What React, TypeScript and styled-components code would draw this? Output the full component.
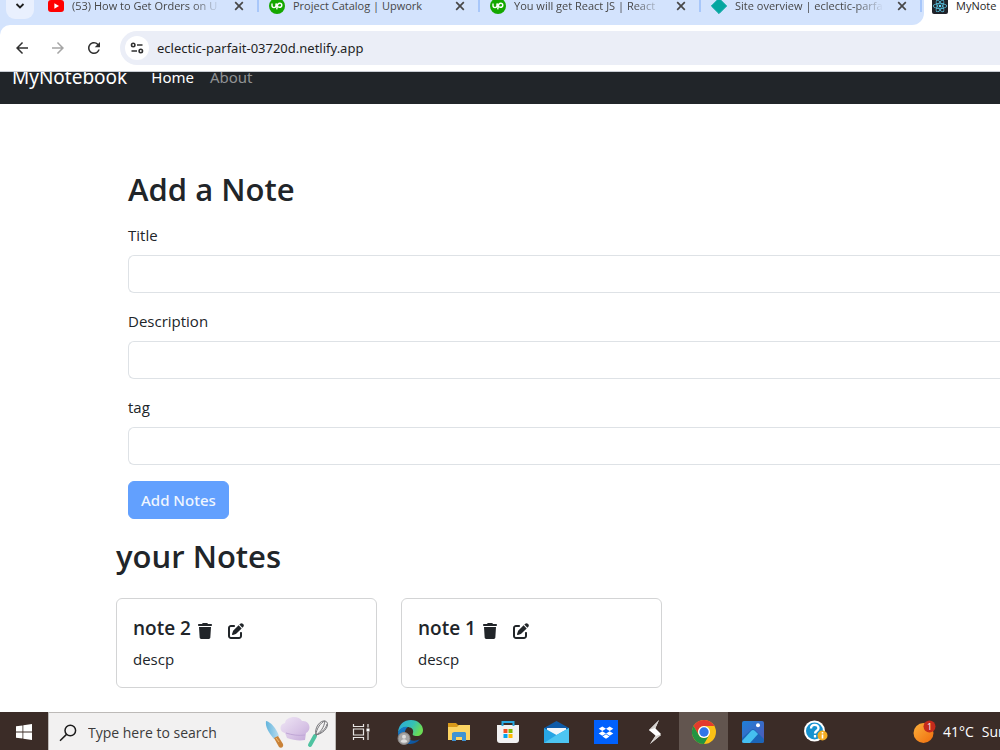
import React from "react";
import styled, { createGlobalStyle } from "styled-components";
import { FaTrash, FaPenToSquare } from "react-icons/fa6";
import { FaReact } from "react-icons/fa";
import { MdArrowBack, MdArrowForward, MdRefresh } from "react-icons/md";

const GlobalStyle = createGlobalStyle`
  * { box-sizing: border-box; }
  html, body, #root { height: 100%; }
  body {
    margin: 0;
    background: #fff;
    color: #212529;
    font-family: "Open Sans", "Noto Sans", sans-serif;
    font-size: 15px;
    line-height: 24px;
    overflow: hidden;
  }
  button, input { font: inherit; color: inherit; }
  h1, p { margin: 0; }
`;

const Screen = styled.div`
  display: flex;
  flex-direction: column;
  height: 100vh;
  overflow: hidden;
`;

const IconButton = styled.button<{ $size: number }>`
  display: flex;
  flex: none;
  align-items: center;
  justify-content: center;
  width: ${(p) => p.$size}px;
  height: ${(p) => p.$size}px;
  padding: 0;
  border: 0;
  background: none;
`;

/* ---------- browser chrome ---------- */

const TabStrip = styled.div`
  display: flex;
  flex: none;
  height: 25px;
  background: #fff;
  font-size: 11px;
  line-height: 16px;
`;

const InactiveTabs = styled.div`
  display: flex;
  flex: none;
  padding: 0 2px 0 6px;
  background: #d3e3fd;
  border-radius: 0 0 12px 0;
`;

const TabSearch = styled.button`
  display: flex;
  flex: none;
  align-items: center;
  justify-content: center;
  width: 28px;
  height: 19px;
  margin-right: 4px;
  padding: 0 0 8px;
  border: 0;
  border-radius: 0 0 9px 9px;
  background: #e9f0fe;
`;

const Tab = styled.div<{ $active?: boolean }>`
  display: flex;
  flex: none;
  align-items: center;
  gap: 8px;
  width: 221px;
  height: 12px;
  padding: 0 8px 0 ${(p) => (p.$active ? 8 : 10)}px;
  border-right: ${(p) => (p.$active ? "0" : "2px solid #a8c7fa")};
  color: ${(p) => (p.$active ? "#1f1f1f" : "#474747")};
`;

const TabTitle = styled.span<{ $fade?: boolean }>`
  flex: 1;
  min-width: 0;
  overflow: hidden;
  white-space: nowrap;
  mask-image: ${(p) =>
    p.$fade ? "linear-gradient(to right, #000 80%, transparent 100%)" : "none"};
`;

const ToolbarBack = styled.div`
  flex: none;
  background: #d3e3fd;
`;

const Toolbar = styled.div`
  display: flex;
  align-items: center;
  height: 47px;
  padding: 0 0 1px 10px;
  background: #fff;
  border-bottom: 1px solid #c9cdd3;
  border-radius: 10px 0 0 0;
`;

const NavButtons = styled.div`
  display: flex;
  gap: 12px;
  margin-right: 14px;
`;

const AddressBar = styled.div`
  display: flex;
  flex: 1;
  align-items: center;
  gap: 8px;
  height: 34px;
  padding-left: 5px;
  border-radius: 17px 0 0 17px;
  background: #ebeef7;
`;

const SiteInfo = styled(IconButton)`
  border-radius: 50%;
  background: #fff;
`;

const Address = styled.input`
  flex: 1;
  min-width: 0;
  padding: 0;
  border: 0;
  outline: 0;
  background: none;
  font-family: "Noto Sans", sans-serif;
  font-size: 13px;
  color: #1f1f1f;
`;

/* ---------- web page ---------- */

const Navbar = styled.nav`
  flex: none;
  height: 32px;
  overflow: hidden;
  background: #212529;
  font-family: "Noto Sans", sans-serif;
`;

const NavRow = styled.div`
  display: flex;
  align-items: center;
  gap: 16px;
  height: 9px;
  padding-left: 12px;
`;

const Brand = styled.a`
  margin-right: 8px;
  font-size: 19px;
  color: #fff;
  text-decoration: none;
`;

const NavLink = styled.a<{ $current?: boolean }>`
  color: ${(p) => (p.$current ? "#fff" : "#909294")};
  text-decoration: none;
`;

const Page = styled.main`
  flex: 1;
  min-height: 0;
  overflow: hidden;
  padding: 63px 0 0 116px;
`;

const NoteForm = styled.form`
  padding-left: 12px;
`;

const Heading = styled.h1`
  font-size: 31px;
  font-weight: 600;
  line-height: 44px;
`;

const Field = styled.div`
  display: flex;
  flex-direction: column;
  gap: 8px;
  margin-bottom: 16px;
`;

const Fields = styled.div`
  padding-top: 12px;
`;

const TextInput = styled.input`
  height: 38px;
  padding: 6px 12px;
  border: 1px solid #dee2e6;
  border-right: 0;
  border-radius: 6px 0 0 6px;
  background: #fff;
`;

const SubmitButton = styled.button`
  height: 38px;
  padding: 0 12px;
  border: 1px solid #62a0fe;
  border-radius: 6px;
  background: #62a0fe;
  color: #eff6ff;
  font-family: "Noto Sans", sans-serif;
  font-weight: 500;
`;

const Notes = styled.section`
  padding-top: 15px;
`;

const NoteGrid = styled.div`
  display: grid;
  grid-template-columns: repeat(auto-fill, 261px);
  gap: 24px;
  padding-top: 20px;
`;

const Card = styled.article`
  height: 90px;
  padding: 16px;
  border: 1px solid #d3d4d5;
  border-radius: 6px;
`;

const CardHead = styled.div`
  display: flex;
  align-items: flex-start;
  height: 28px;
  margin-bottom: 4px;
`;

const CardTitle = styled.h2`
  margin: 0 6px 0 0;
  font-size: 19px;
  font-weight: 600;
  line-height: 26px;
`;

const CardActions = styled.div`
  display: flex;
  gap: 15px;
  padding-top: 8px;
`;

/* ---------- taskbar ---------- */

const Taskbar = styled.footer`
  display: flex;
  flex: none;
  height: 38px;
  background: #3b2c27;
  color: #fff;
`;

const TaskButton = styled.button<{ $active?: boolean; $width?: number }>`
  display: flex;
  flex: none;
  align-items: center;
  justify-content: center;
  width: ${(p) => p.$width ?? 49}px;
  padding: 2px 0 0;
  border: 0;
  background: ${(p) => (p.$active ? "#62554f" : "none")};
`;

const SearchBox = styled.label`
  display: flex;
  flex: none;
  align-items: center;
  width: 288px;
  padding: 2px 5px 0 10px;
  border: 1px solid #bdbab8;
  border-bottom: 0;
  background: #f2f1f1;
`;

const SearchInput = styled.input`
  flex: 1;
  min-width: 0;
  margin-left: 11px;
  padding: 0;
  border: 0;
  outline: 0;
  background: none;
  font-size: 14px;
  color: #3b3b3b;
  &::placeholder { color: #3b3b3b; opacity: 1; }
`;

const Weather = styled.button`
  display: flex;
  flex: none;
  align-items: center;
  gap: 7px;
  margin-left: 59px;
  padding: 2px 0 0;
  border: 0;
  background: none;
  color: #fff;
  font-size: 14px;
  white-space: nowrap;
`;

const WeatherText = styled.span`
  display: flex;
  gap: 8px;
`;

/* ---------- drawings ---------- */

const YouTube = () => (
  <svg width="16" height="16" viewBox="0 0 16 16">
    <rect x="0" y="2" width="16" height="12" rx="3" fill="#f00" />
    <path d="M6.400 5.200v5.600L11 8z" fill="#fff" />
  </svg>
);

const Upwork = () => (
  <svg width="16" height="16" viewBox="0 0 16 16">
    <circle cx="8" cy="8" r="8" fill="#14a800" />
    <path
      d="M3 5.400v2.200a2 2 0 0 0 4 0V5.400c.6 2 1.600 3.700 3.300 3.900 1.500 0 2.500-.9 2.500-2.100s-.9-2-2.100-2c-1.400 0-2.100 1-2.300 2.400l-.7 3.800"
      fill="none" stroke="#fff" strokeWidth="1.400"
    />
  </svg>
);

const Netlify = () => (
  <svg width="16" height="16" viewBox="0 0 16 16">
    <path d="M8 .4 15.600 8 8 15.600.4 8z" fill="#05a6a0" stroke="#05a6a0" strokeLinejoin="round" />
  </svg>
);

const ReactBadge = styled.span`
  display: flex;
  align-items: center;
  justify-content: center;
  width: 16px;
  height: 16px;
  border-radius: 2px;
  background: #20232a;
  color: #61dafb;
`;

const Close = () => (
  <svg width="10" height="10" viewBox="0 0 10 10">
    <path d="m1.200 1.200 7.600 7.600M8.800 1.200 1.200 8.800" stroke="#474747" strokeWidth="1.700" />
  </svg>
);

const ChevronDown = () => (
  <svg width="10" height="10" viewBox="0 0 10 10">
    <path d="m1.500 3 3.500 3.500L8.500 3" fill="none" stroke="#1f1f1f" strokeWidth="1.800" />
  </svg>
);

const Tune = () => (
  <svg width="14" height="14" viewBox="0 0 14 14" fill="none" stroke="#303030" strokeWidth="1.600">
    <circle cx="3.200" cy="4" r="1.700" />
    <path d="M7 4h5.500M1.500 10H7" />
    <circle cx="10.800" cy="10" r="1.700" />
  </svg>
);

const Windows = () => (
  <svg width="16" height="16" viewBox="0 0 16 16" fill="#fff">
    <path d="M0 2.300 6.500 1.400v6.200H0zM7.300 1.300 16 0v7.600H7.300zM0 8.400h6.500v6.200L0 13.700zM7.300 8.400H16V16l-8.700-1.300z" />
  </svg>
);

const Magnifier = () => (
  <svg width="18" height="18" viewBox="0 0 18 18" fill="none" stroke="#1b1b1b" strokeWidth="1.500">
    <circle cx="11.300" cy="6.500" r="5.300" />
    <path d="M7.500 10.400 1 16.800" />
  </svg>
);

const Kitchen = () => (
  <svg width="66" height="34" viewBox="0 0 66 34">
    <defs>
      <linearGradient id="hat" x1="0" y1="0" x2="1" y2="1">
        <stop offset="0" stopColor="#efe6f5" />
        <stop offset=".6" stopColor="#d8c4e6" />
        <stop offset="1" stopColor="#c3a8d8" />
      </linearGradient>
      <linearGradient id="blade" x1="0" y1="0" x2="1" y2="0">
        <stop offset="0" stopColor="#62b4dc" />
        <stop offset="1" stopColor="#b8dcef" />
      </linearGradient>
    </defs>
    <path d="M2 5c5 1 10 7 13 15l-5 3C5 17 1 11 2 5z" fill="url(#blade)" />
    <path d="m10 22 4-2 5 8c1 3-2 5-4 3z" fill="#c98238" />
    <path d="m12 22 3 4" stroke="#f0bd76" strokeWidth="1" />
    <path d="M21 17c-6-1-6-9 0-10 1-7 14-8 17-2 8-1 10 9 4 12l-1 7c-6 1-12 0-18-2z" fill="url(#hat)" />
    <path d="M22 17c6 2 13 3 19 2" fill="none" stroke="#c0a6d6" strokeWidth="1" />
    <path d="m46 29 5-9" stroke="#4fc3a1" strokeWidth="4" strokeLinecap="round" />
    <g fill="none" stroke="#77777b" strokeWidth="1">
      <path d="M52 19c-2-7 4-15 9-14s3 11-9 14z" />
      <path d="M52 19c0-6 5-13 9-14-1 6-4 11-9 14zM52 19c4-1 10-6 11-11" />
    </g>
  </svg>
);

const TaskView = () => (
  <svg width="18" height="18" viewBox="0 0 18 18" fill="none" stroke="#e8e5e3" strokeWidth="1.200">
    <path d="M1.500 1v2.500h10V1M1.500 17v-2.500h10V17M1.500 6h10v6h-10zM16 1v3.500M16 9v8" />
    <rect x="14.500" y="5.500" width="3" height="3" fill="#fff" stroke="none" />
  </svg>
);

const Edge = () => (
  <svg width="26" height="26" viewBox="0 0 26 26">
    <defs>
      <linearGradient id="edgeTop" x1="0" y1="0" x2="1" y2=".4">
        <stop offset="0" stopColor="#2aa8dc" />
        <stop offset=".6" stopColor="#35c1b5" />
        <stop offset="1" stopColor="#6bdc55" />
      </linearGradient>
      <linearGradient id="edgeLow" x1="0" y1="0" x2="1" y2="1">
        <stop offset="0" stopColor="#1681cf" />
        <stop offset="1" stopColor="#0c4c94" />
      </linearGradient>
    </defs>
    <path d="M1 13C2 5 7 1 14 1c7 0 12 5 12 10 0 4-3 6-6 6-4 0-5-1-4-3 1-4-2-6-6-6-4 0-7 2-9 5z" fill="url(#edgeTop)" />
    <path d="M1 13c2-4 6-6 10-5-3 2-4 6-2 9 3 5 9 6 14 3-3 4-7 5-11 5C6 25 1 20 1 13z" fill="url(#edgeLow)" />
    <circle cx="7" cy="19.500" r="6" fill="#a6a6a6" stroke="#8a8583" />
    <circle cx="7" cy="17.700" r="2" fill="#dedede" />
    <path d="M3.800 22.800c0-3.500 6.400-3.500 6.400 0-1.600 1.400-4.800 1.400-6.400 0z" fill="#dedede" />
  </svg>
);

const Explorer = () => (
  <svg width="22" height="20" viewBox="0 0 22 20">
    <path d="M0 1h8l2 2h12v15H0z" fill="#d99a1b" />
    <path d="M0 5h9l2-2h11v15H0z" fill="#fcd462" />
    <path d="M4 19v-8l2-1h11l1 1v8h-4v-4H8v4z" fill="#3f93d2" />
  </svg>
);

const Store = () => (
  <svg width="24" height="24" viewBox="0 0 24 24">
    <path d="M1 5h22v15a3 3 0 0 1-3 3H4a3 3 0 0 1-3-3z" fill="#f2f2f2" />
    <path d="M6.500 6V2h11v4" fill="none" stroke="#29a9e1" strokeWidth="2" />
    <path d="M7.500 9h4v4h-4z" fill="#f25022" />
    <path d="M12.500 9h4v4h-4z" fill="#7fba00" />
    <path d="M7.500 14h4v4h-4z" fill="#00a4ef" />
    <path d="M12.500 14h4v4h-4z" fill="#ffb900" />
  </svg>
);

const Mail = () => (
  <svg width="26" height="24" viewBox="0 0 26 24">
    <path d="M0 8 12.500 1 25 8v6H0z" fill="#0f5ba7" />
    <path d="M3 8h19v7H3z" fill="#f4f7fa" />
    <path d="M0 8l12.500 7L25 8v15H0z" fill="#27a5e4" />
    <path d="M25 8v15H0l12.500-8z" fill="#4dc5f1" />
  </svg>
);

const Dropbox = () => (
  <svg width="24" height="24" viewBox="0 0 24 24">
    <path d="M0 0h24v24H0z" fill="#0061fe" />
    <path
      d="m8.300 6.500 3.700 2.300-3.700 2.300-3.600-2.300zM15.700 6.500l3.600 2.300-3.600 2.300L12 8.800zM8.300 11.200l3.700 2.300-3.700 2.300-3.600-2.300zM15.700 11.200l3.600 2.300-3.600 2.300L12 13.500zM12 14.300l3.500 2.200L12 18.700l-3.500-2.200z"
      fill="#fff"
    />
  </svg>
);

const Bolt = () => (
  <svg width="14" height="24" viewBox="0 0 14 24">
    <path d="M11 0 1 10l7 5-6 9 11-9-6-6z" fill="#f5f3f1" />
    <path d="m11 0-4 9-6 1zM8 15l5 0-11 9z" fill="#d6d2cf" />
    <path d="m1 10 6-2 6 6-5 2z" fill="#fff" />
  </svg>
);

const Chrome = () => (
  <svg width="24" height="24" viewBox="0 0 24 24">
    <circle cx="12" cy="12" r="12" fill="#fbc116" />
    <path d="M1.600 6A12 12 0 0 1 22.400 6H12a6 6 0 0 0-5.200 9z" fill="#e33b2e" />
    <path d="M1.600 6A12 12 0 0 0 12 24l5.200-9a6 6 0 0 1-10.400 0z" fill="#229342" />
    <circle cx="12" cy="12" r="6" fill="#fff" />
    <circle cx="12" cy="12" r="4.700" fill="#2f75e8" />
  </svg>
);

const Photos = () => (
  <svg width="22" height="22" viewBox="0 0 22 22">
    <defs>
      <linearGradient id="sky" x1="0" y1="0" x2="1" y2="1">
        <stop offset="0" stopColor="#1e80d8" />
        <stop offset="1" stopColor="#5257b5" />
      </linearGradient>
      <clipPath id="frame"><rect width="22" height="22" rx="2" /></clipPath>
    </defs>
    <g clipPath="url(#frame)">
      <rect width="22" height="22" fill="url(#sky)" />
      <path d="M0 17 9 9q2-2 4 0l9 9v4H0z" fill="#1c65b8" />
      <path d="M0 20 9 10q2-2 4 0l3 3-8 9H0z" fill="#45bff0" />
    </g>
    <circle cx="16" cy="4.300" r="2" fill="#fff" />
  </svg>
);

const Help = () => (
  <svg width="24" height="24" viewBox="0 0 24 24">
    <circle cx="10.500" cy="11" r="10.500" fill="#fff" />
    <circle cx="10.500" cy="11" r="8.500" fill="#1592d0" />
    <path d="M7 8.500c0-5 7.500-4.500 7.500-.5 0 3-3.500 2.500-3.500 5.500M11 15v2.500" fill="none" stroke="#fff" strokeWidth="2.300" />
    <circle cx="18.500" cy="15.500" r="5" fill="#f5ad22" />
    <path d="M18.500 12v1.500M18.500 14.500v4" stroke="#fff" strokeWidth="1.600" />
  </svg>
);

const Sun = () => (
  <svg width="23" height="24" viewBox="0 0 23 24">
    <defs>
      <linearGradient id="sun" x1="0" y1="0" x2="1" y2="1">
        <stop offset="0" stopColor="#fbb03b" />
        <stop offset="1" stopColor="#ef6c0c" />
      </linearGradient>
    </defs>
    <circle cx="10.500" cy="13" r="10" fill="url(#sun)" />
    <circle cx="16.500" cy="6.500" r="6" fill="#c42b1c" />
    <text x="16.500" y="10" fontSize="9" fill="#fff" textAnchor="middle">1</text>
  </svg>
);

/* ---------- screen ---------- */

const tabs = [
  { icon: <YouTube />, title: "(53) How to Get Orders on U", fade: true },
  { icon: <Upwork />, title: "Project Catalog | Upwork", fade: false },
  { icon: <Upwork />, title: "You will get React JS | React", fade: true },
  { icon: <Netlify />, title: "Site overview | eclectic-parfa", fade: true },
];

const fields = [
  { id: "title", label: "Title" },
  { id: "description", label: "Description" },
  { id: "tag", label: "tag" },
];

const notes = [
  { title: "note 2", description: "descp" },
  { title: "note 1", description: "descp" },
];

const apps = [
  { name: "Task View", icon: <TaskView /> },
  { name: "Edge", icon: <Edge /> },
  { name: "File Explorer", icon: <Explorer /> },
  { name: "Store", icon: <Store /> },
  { name: "Mail", icon: <Mail /> },
  { name: "Dropbox", icon: <Dropbox /> },
  { name: "Shortcut", icon: <Bolt /> },
  { name: "Chrome", icon: <Chrome />, active: true },
  { name: "Photos", icon: <Photos /> },
];

export default function App() {
  return (
    <Screen>
      <GlobalStyle />
      <TabStrip>
        <InactiveTabs>
          <TabSearch aria-label="Search tabs"><ChevronDown /></TabSearch>
          {tabs.map((tab) => (
            <Tab key={tab.title}>
              {tab.icon}
              <TabTitle $fade={tab.fade}>{tab.title}</TabTitle>
              <IconButton $size={20} aria-label="Close tab"><Close /></IconButton>
            </Tab>
          ))}
        </InactiveTabs>
        <Tab $active>
          <ReactBadge><FaReact size={14} /></ReactBadge>
          <TabTitle>MyNote</TabTitle>
        </Tab>
      </TabStrip>
      <ToolbarBack>
        <Toolbar>
          <NavButtons>
            <IconButton $size={24} aria-label="Back"><MdArrowBack size={18} color="#303030" /></IconButton>
            <IconButton $size={24} aria-label="Forward"><MdArrowForward size={18} color="#a5a5a5" /></IconButton>
            <IconButton $size={24} aria-label="Reload"><MdRefresh size={18} color="#303030" /></IconButton>
          </NavButtons>
          <AddressBar>
            <SiteInfo $size={24} aria-label="Site information"><Tune /></SiteInfo>
            <Address aria-label="Address" defaultValue="eclectic-parfait-03720d.netlify.app" />
          </AddressBar>
        </Toolbar>
      </ToolbarBack>

      <Navbar>
        <NavRow>
          <Brand href="#">MyNotebook</Brand>
          <NavLink href="#" $current>Home</NavLink>
          <NavLink href="#">About</NavLink>
        </NavRow>
      </Navbar>

      <Page>
        <NoteForm onSubmit={(e) => e.preventDefault()}>
          <Heading>Add a Note</Heading>
          <Fields>
            {fields.map((field) => (
              <Field key={field.id}>
                <label htmlFor={field.id}>{field.label}</label>
                <TextInput id={field.id} />
              </Field>
            ))}
          </Fields>
          <SubmitButton>Add Notes</SubmitButton>
        </NoteForm>
        <Notes>
          <Heading>your Notes</Heading>
          <NoteGrid>
            {notes.map((note) => (
              <Card key={note.title}>
                <CardHead>
                  <CardTitle>{note.title}</CardTitle>
                  <CardActions>
                    <IconButton $size={16} aria-label="Delete note"><FaTrash size={16} /></IconButton>
                    <IconButton $size={16} aria-label="Edit note"><FaPenToSquare size={16} /></IconButton>
                  </CardActions>
                </CardHead>
                <p>{note.description}</p>
              </Card>
            ))}
          </NoteGrid>
        </Notes>
      </Page>

      <Taskbar>
        <TaskButton $width={48} aria-label="Start"><Windows /></TaskButton>
        <SearchBox>
          <Magnifier />
          <SearchInput aria-label="Search" placeholder="Type here to search" />
          <Kitchen />
        </SearchBox>
        {apps.map((app) => (
          <TaskButton key={app.name} $active={app.active} aria-label={app.name}>{app.icon}</TaskButton>
        ))}
        <TaskButton $width={77} aria-label="Help">
          <Help />
        </TaskButton>
        <Weather>
          <Sun />
          <WeatherText><span>41°C</span><span>Sun</span></WeatherText>
        </Weather>
      </Taskbar>
    </Screen>
  );
}
